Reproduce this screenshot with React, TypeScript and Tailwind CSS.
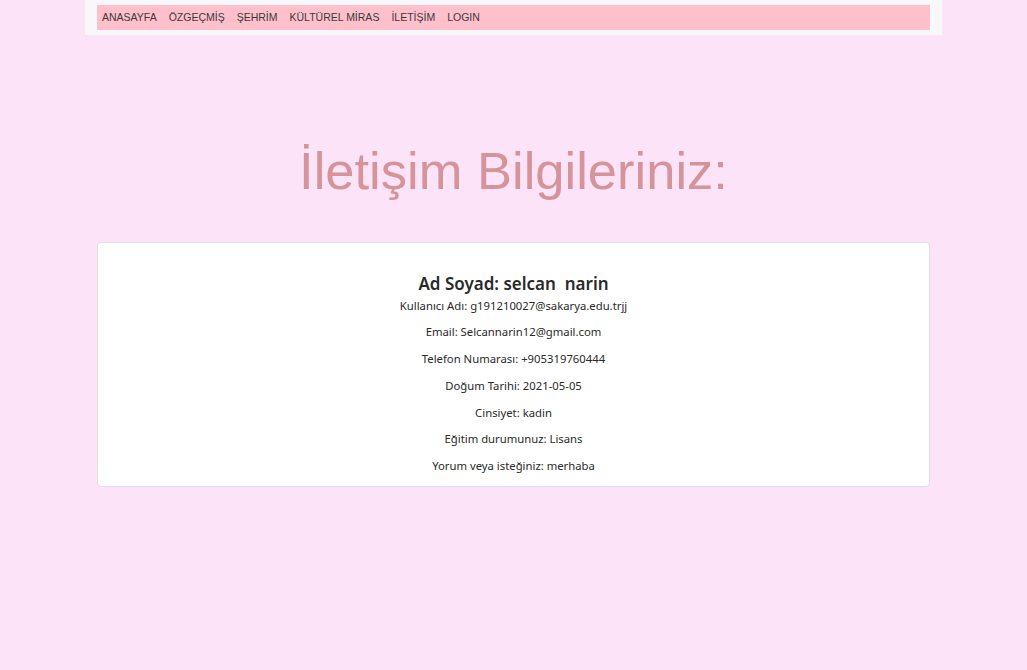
const navItems = ["ANASAYFA", "ÖZGEÇMİŞ", "ŞEHRİM", "KÜLTÜREL MİRAS", "İLETİŞİM", "LOGIN"];

const details = [
  "Kullanıcı Adı: g191210027@sakarya.edu.trjj",
  "Email: Selcannarin12@gmail.com",
  "Telefon Numarası: +905319760444",
  "Doğum Tarihi: 2021-05-05",
  "Cinsiyet: kadin",
  "Eğitim durumunuz: Lisans",
  "Yorum veya isteğiniz: merhaba",
];

export default function App() {
  return (
    <div className="min-h-[670px] w-full bg-[#fde3f7] font-['Noto_Sans',sans-serif]">
      <div className="mx-auto w-[857px] bg-[#f8f8fa] px-3 pt-[5px] pb-[5px]">
        <nav className="flex h-[25px] items-center gap-[12px] bg-[#ffc0cb] px-[5px] font-['Liberation_Sans',Arial,sans-serif] text-[10.5px] text-[#3a3a3a]">
          {navItems.map((item) => (
            <a key={item} href="#" className="leading-none">
              {item}
            </a>
          ))}
        </nav>
      </div>

      <div className="mx-auto w-[833px]">
        <h1 className="mt-[110px] text-center font-['Liberation_Sans',Arial,sans-serif] text-[52.5px] leading-none text-[#d5939a]">
          İletişim Bilgileriniz:
        </h1>

        <div className="mt-[44px] rounded-[4px] border border-[#e2dde0] bg-white pt-[30px] pb-[11px] text-center text-[#2a2a2a]">
          <h2 className="text-[17px] font-semibold leading-[22px]">Ad Soyad: selcan&nbsp; narin</h2>
          <div className="mt-[3px] flex flex-col gap-[10px] text-[11.3px] leading-[16.8px]">
            {details.map((d) => (
              <p key={d}>{d}</p>
            ))}
          </div>
        </div>
      </div>
    </div>
  );
}
